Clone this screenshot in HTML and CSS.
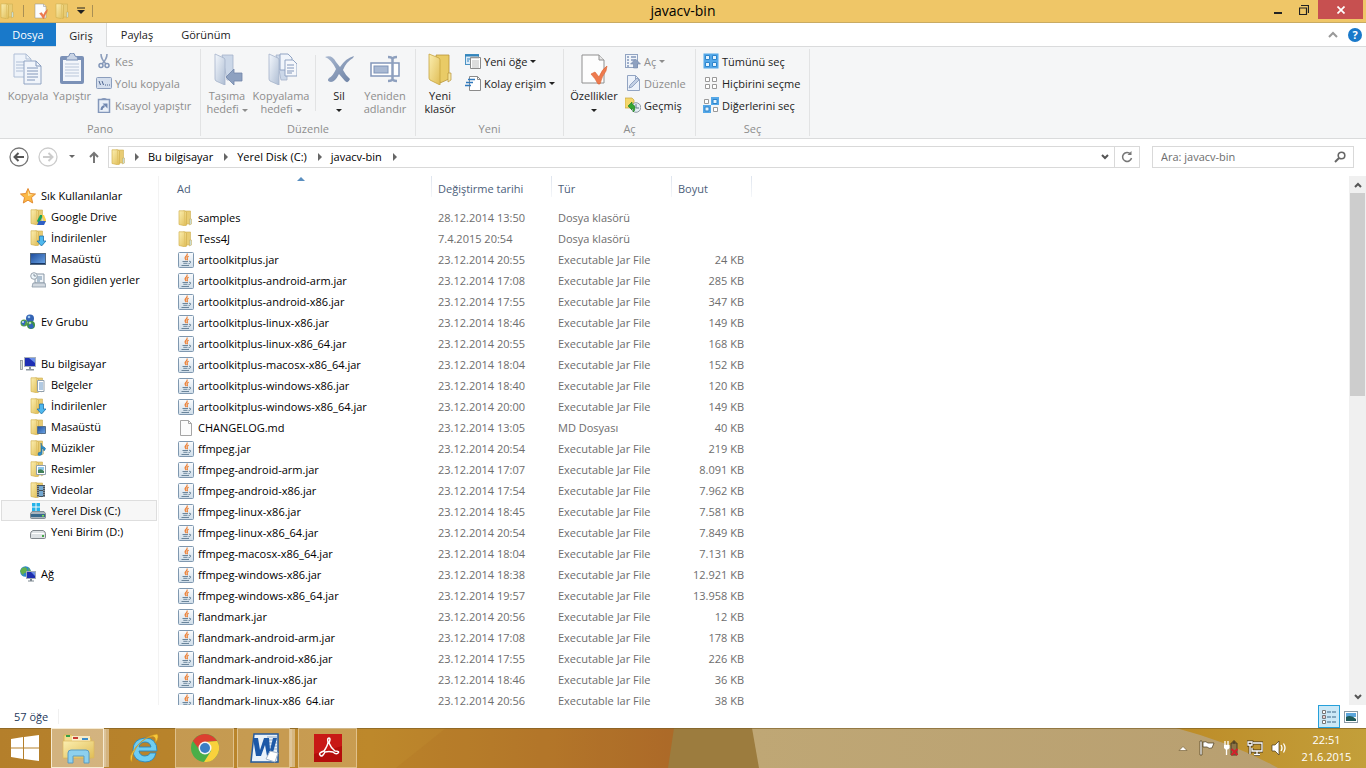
FILE: index.html
```html
<!DOCTYPE html>
<html lang="tr">
  <head>
    <meta charset="UTF-8" />
    <meta name="viewport" content="width=device-width, initial-scale=1.0" />
    <title>javacv-bin</title>
    <link rel="stylesheet" href="styles.css">
  </head>

  <body>
    <!-- Icon sprite -->
    <svg class="sprite" aria-hidden="true">
      <defs>
        <linearGradient id="gFolder" x1="0" y1="0" x2="1" y2="1">
          <stop offset="0" stop-color="#fbeeb0" /><stop offset="1" stop-color="#e0bd55" />
        </linearGradient>
        <linearGradient id="gPale" x1="0" y1="0" x2="1" y2="1">
          <stop offset="0" stop-color="#f4f8fd" /><stop offset="1" stop-color="#aebdd3" />
        </linearGradient>
        <linearGradient id="gBlue" x1="0" y1="0" x2="1" y2="1">
          <stop offset="0" stop-color="#1c4a9a" /><stop offset="1" stop-color="#6ea8e8" />
        </linearGradient>
        <linearGradient id="gJar" x1="0" y1="0" x2="0" y2="1">
          <stop offset="0" stop-color="#fafcfe" /><stop offset="1" stop-color="#cfdde9" />
        </linearGradient>
        <linearGradient id="gX" x1="0" y1="0" x2="1" y2="1">
          <stop offset="0" stop-color="#a9b8d0" /><stop offset="1" stop-color="#6b80a3" />
        </linearGradient>
      </defs>
      <symbol id="folder" viewBox="0 0 16 16">
        <path d="M5 1h7.500v13H6z" fill="#e8cc74" stroke="#cfae52" stroke-width=".6" />
        <path d="M11.500 9h2v5l-2 1z" fill="#c9dcd2" stroke="#c9aa55" stroke-width=".5" />
        <path d="M1 .8h5.500l2 1.200v13.200l-2 .5L1 14.500z" fill="url(#gFolder)" stroke="#d2b152" stroke-width=".7" />
        <path d="M6.500 1v14.500" stroke="#e0c268" stroke-width=".8" />
      </symbol>
      <symbol id="folder-big" viewBox="0 0 32 32">
        <path d="M12 2h13v24l-9 4z" fill="#e9cb66" stroke="#b8943a" stroke-width=".8" />
        <path d="M24 20h3v7l-3 2z" fill="#f6e6a0" stroke="#b8943a" stroke-width=".7" />
        <path d="M5 1l10 4q1 1 1 2v25L6 27q-1-1-1-2z" fill="url(#gFolder)" stroke="#c7a440" stroke-width=".8" />
      </symbol>
      <symbol id="pale-folder" viewBox="0 0 32 32">
        <path d="M11 2h11v25h-6z" fill="#cbd7e8" stroke="#a4b3ca" stroke-width=".8" />
        <path d="M4 1l9 4q1 1 1 2v25L5 28q-1-1-1-2z" fill="url(#gPale)" stroke="#a4b3ca" stroke-width=".8" />
      </symbol>
      <symbol id="copy" viewBox="0 0 32 32">
        <path d="M2 1h12l5 5v18H2z" fill="#eef3fa" stroke="#b0bfd6" />
        <path d="M14 1v5h5M4 9h9M4 12h8M4 15h8M4 18h7" fill="none" stroke="#b0bfd6" />
        <path d="M12 8h12l5 5v18H12z" fill="#f1f5fb" stroke="#91a4c3" />
        <path d="M24 8v5h5M15 15h11M15 18h11M15 21h11M15 24h11M15 27h8" fill="none" stroke="#8297ba" />
      </symbol>
      <symbol id="paste" viewBox="0 0 32 32">
        <rect x="4" y="3" width="24" height="28" rx="2" fill="#7b91b7" />
        <rect x="7" y="7" width="18" height="21" fill="#f3f6fb" />
        <path d="M9 11h14M9 14h14M9 17h14M9 20h14M9 23h14" stroke="#b9c6da" />
        <path d="M10 7q0-4 3-4 0-3 3-3t3 3q3 0 3 4z" fill="#c9d4e5" stroke="#7b91b7" />
      </symbol>
      <symbol id="cut" viewBox="0 0 16 16">
        <path d="M5 1q0 5 5 10M11 1q0 5-5 10" fill="none" stroke="#8c9dbb" stroke-width="1.600" />
        <circle cx="5" cy="12.500" r="2" fill="none" stroke="#8296b8" stroke-width="1.500" />
        <circle cx="11" cy="12.500" r="2" fill="none" stroke="#8296b8" stroke-width="1.500" />
      </symbol>
      <symbol id="path" viewBox="0 0 16 16">
        <rect x=".5" y="2.500" width="15" height="11" rx="1" fill="#d4deed" stroke="#8b9dbc" />
        <path d="M3 6l1.500 4M6 6l1.500 4" stroke="#4d648f" />
        <path d="M9 10h1M11 10h1M13 10h1" stroke="#4d648f" />
      </symbol>
      <symbol id="shortcut" viewBox="0 0 16 16">
        <rect x="2.500" y="2.500" width="11" height="13" fill="#eaf0f8" stroke="#8397ba" stroke-width="1.500" />
        <path d="M5 3q0-2 3-2t3 2z" fill="#8397ba" />
        <path d="M5.500 13q0-3 3-4" fill="none" stroke="#7087af" stroke-width="2" />
        <path d="M6.500 6.500h5v5z" fill="#7087af" />
      </symbol>
      <symbol id="move-to" viewBox="0 0 32 32">
        <use href="#pale-folder" />
        <path d="M15 24l8-8v4h8v8h-8v4z" fill="#8ea1c0" stroke="#7287aa" stroke-width=".8" />
      </symbol>
      <symbol id="copy-to" viewBox="0 0 32 32">
        <use href="#pale-folder" />
        <path d="M15 1h8l4 4v12H15z" fill="#f1f5fb" stroke="#91a4c3" />
        <path d="M20 7h8l4 4v12H20z" fill="#f6f8fc" stroke="#91a4c3" />
        <path d="M22 12h7M22 15h7M22 18h7M22 20h5" stroke="#8297ba" />
      </symbol>
      <symbol id="delete" viewBox="0 0 32 32">
        <path d="M2 4q7-3 11 5l4 5q6-9 14-11l-1 2q-7 4-10 12 3 6 7 9-2 5-5 2l-6-7q-4 8-8 8-5-1-2-4 4-2 7-9Q8 6 2 4z" fill="url(#gX)" />
      </symbol>
      <symbol id="rename" viewBox="0 0 32 32">
        <rect x="2" y="10" width="28" height="13" fill="#fff" stroke="#8397ba" stroke-width="1.500" />
        <rect x="5" y="13" width="14" height="7" fill="#a9b9d3" stroke="#7f94b8" />
        <path d="M19 4q4 0 4.500 2Q24 4 28 4M23.500 5v22M19 28q4 0 4.500-2 .5 2 4.500 2" fill="none" stroke="#8ea0be" stroke-width="2.500" />
      </symbol>
      <symbol id="new-item" viewBox="0 0 16 16">
        <rect x=".5" y="1.500" width="13" height="10" fill="#dcebf8" stroke="#4b93c4" />
        <path d="M0 2.500h14" stroke="#3285bd" stroke-width="2" />
        <path d="M2 6h3M2 8h2" stroke="#3285bd" />
        <path d="M5.500 4.500h10v11h-10z" fill="#fff" stroke="#8b8b8b" />
        <path d="M7 8h7M7 10h7M7 12h7M7 14h7M7 3v3M9 3v3M11 3v3M13 3v3" stroke="#aaa" stroke-width=".8" />
      </symbol>
      <symbol id="easy" viewBox="0 0 16 16">
        <path d="M4.500 1.500h8l3 3v11h-11z" fill="#fff" stroke="#8b8b8b" />
        <path d="M12.500 1.500v3h3" fill="none" stroke="#8b8b8b" />
        <path d="M3 4.500h7M1 7.500h7M0 10.500h6" stroke="#2f78bd" stroke-width="1.300" />
      </symbol>
      <symbol id="props" viewBox="0 0 32 32">
        <path d="M4 2h17l5 5v23H4z" fill="#fdfdfd" stroke="#8f8f8f" />
        <path d="M21 2v5h5" fill="#e6e6e6" stroke="#8f8f8f" />
        <path d="M13 21l4-2 4 5q3-8 8-11l-1 5q-4 5-6 13h-2q-3-6-7-10z" fill="#ee7a4e" stroke="#d9612f" stroke-width=".6" />
      </symbol>
      <symbol id="open" viewBox="0 0 16 16">
        <rect x=".5" y="1.500" width="12" height="13" fill="#f1f5fa" stroke="#92a4c2" />
        <path d="M2 4h2M6 4h5M2 7h2M6 7h4M2 10h2M2 13h2" stroke="#8297ba" stroke-width="1.500" />
        <path d="M10.500 6l5 5h-3v4h-4v-4h-3z" fill="#8ea1c0" stroke="#7287aa" stroke-width=".6" />
      </symbol>
      <symbol id="edit" viewBox="0 0 16 16">
        <path d="M2.500.5h8l4 4v11h-12z" fill="#edf2fa" stroke="#92a4c2" />
        <path d="M10.500.5v4h4" fill="none" stroke="#92a4c2" />
        <path d="M4 13l1-3 7-7 2 2-7 7z" fill="#c3d0e4" stroke="#8397ba" stroke-width=".8" />
      </symbol>
      <symbol id="history" viewBox="0 0 16 16">
        <path d="M0 1h7l2 2v8H0z" fill="#f5d76b" stroke="#c7a33e" stroke-width=".7" />
        <circle cx="11" cy="10.500" r="4.800" fill="#e4eef5" stroke="#8f9aa3" />
        <path d="M11 7v4h3" fill="none" stroke="#5f7789" />
        <path d="M3 9l4-4v2q3 1 3 4t-2 4q1-3-1-4v2z" fill="#33a532" stroke="#1b7a20" stroke-width=".6" />
      </symbol>
      <symbol id="sel-all" viewBox="0 0 16 16">
        <rect x=".5" y=".5" width="15" height="15" fill="#55a8e8" />
        <path d="M2.500 2.500h4v4h-4zM9.500 2.500h4v4h-4zM2.500 9.500h4v4h-4zM9.500 9.500h4v4h-4z" fill="#e6f4fd" stroke="#2c84cc" />
      </symbol>
      <symbol id="sel-none" viewBox="0 0 16 16">
        <path d="M2.500 2.500h4v4h-4zM9.500 2.500h4v4h-4zM2.500 9.500h4v4h-4zM9.500 9.500h4v4h-4z" fill="#fff" stroke="#999" />
      </symbol>
      <symbol id="sel-inv" viewBox="0 0 16 16">
        <path d="M8 0h8v8H8zM0 8h8v8H0z" fill="#55a8e8" />
        <path d="M10 2.500h4v4h-4zM2 10h4v4H2z" fill="#e6f4fd" stroke="#2c84cc" />
        <path d="M1.500 2.500h4v4h-4zM10.500 10.500h4v4h-4z" fill="#fff" stroke="#999" />
      </symbol>
      <symbol id="jar" viewBox="0 0 16 16">
        <rect x=".5" y=".5" width="15" height="15" rx="1" fill="url(#gJar)" stroke="#7f98b0" />
        <path d="M9 1.500q.8 1.500-1.200 3-1.500 1.500.4 3.500M10.700 4.300q-2.400 1-1.400 2.300.5.900-.5 1.600" fill="none" stroke="#ec8137" stroke-width="1.200" />
        <path d="M4.500 9.500h5.500M5.300 11.300H9.500M3.500 13.500h7.500M11 9.200q2.400 0 1.500 1.500-.5.700-2 1" fill="none" stroke="#5d7a92" stroke-width=".9" />
      </symbol>
      <symbol id="file" viewBox="0 0 16 16">
        <path d="M2.500.5h8l3 3v12h-11z" fill="#fcfcfc" stroke="#a5a5a5" />
        <path d="M10.500.5v3h3" fill="none" stroke="#a5a5a5" />
      </symbol>
      <symbol id="star" viewBox="0 0 16 16">
        <path d="M8 .5l2.200 5 5.300.5-4 3.600L12.700 15 8 12.200 3.300 15l1.200-5.400-4-3.600 5.300-.5z" fill="#fbb945" stroke="#e08429" stroke-width=".9" />
        <path d="M8 2.500L9.300 6 13 6.700 8 8z" fill="#fde4a0" />
      </symbol>
      <symbol id="gdrive" viewBox="0 0 16 16">
        <use href="#folder" />
        <path d="M10 6h3l-4 9-2-3z" fill="#1ba05c" /><path d="M12 6h2l3 7h-3z" fill="#fdd045" /><path d="M9 12h7l-2 4H7z" fill="#2f5fc4" />
      </symbol>
      <symbol id="download" viewBox="0 0 16 16">
        <use href="#folder" />
        <path d="M9.500 6h4v5H16l-4.500 5L7 11h2.500z" fill="#4fb8ee" stroke="#1f73ae" stroke-width=".8" />
      </symbol>
      <symbol id="desktop" viewBox="0 0 16 16">
        <rect x=".5" y="2.500" width="15" height="11" fill="url(#gBlue)" stroke="#52677e" />
        <path d="M1 12.500h14" stroke="#173767" />
      </symbol>
      <symbol id="recent" viewBox="0 0 16 16">
        <path d="M5 2h9v9H5z" fill="#f0f4f8" stroke="#8997a5" />
        <path d="M7 5h5M7 7h5M7 9h3" stroke="#6b8ba8" />
        <path d="M3 11h12l1 4H2z" fill="#d1d8df" stroke="#8997a5" stroke-width=".8" />
        <circle cx="4" cy="4" r="3.300" fill="#eef6fb" stroke="#98a3ad" />
        <path d="M4 2v2h2" fill="none" stroke="#6b7c8b" stroke-width=".8" />
      </symbol>
      <symbol id="homegroup" viewBox="0 0 16 16">
        <circle cx="10" cy="4.500" r="4" fill="#3464b5" /><circle cx="4" cy="9" r="3.500" fill="#55a049" /><circle cx="11" cy="11" r="4" fill="#3c8f48" />
        <path d="M1 9q1-3 5-2l-2 5zM8 12l4-3 2 4-3 2z" fill="#3266c1" />
        <circle cx="9" cy="3" r="1.300" fill="#9ec8ee" /><circle cx="10" cy="9" r="1.300" fill="#b5e0b0" /><circle cx="3" cy="8" r="1" fill="#d0e8f7" />
      </symbol>
      <symbol id="computer" viewBox="0 0 16 16">
        <rect x=".5" y="4.500" width="2" height="9" fill="#d9e1d6" stroke="#8a9399" stroke-width=".8" />
        <rect x="4.500" y="1.500" width="11" height="9" fill="#1e2fb4" stroke="#a9b2bb" />
        <path d="M9 2h6v5z" fill="#6c91e8" /><path d="M9 11h2v2h3v1.500H6V13h3z" fill="#8d979f" />
      </symbol>
      <symbol id="docs" viewBox="0 0 16 16">
        <use href="#folder" />
        <path d="M7.500 3.500h6.500v11H7.500z" fill="#fff" stroke="#92a0ad" /><path d="M9 6h4M9 8h4M9 10h4M9 12h4" stroke="#6595c6" />
      </symbol>
      <symbol id="fdesk" viewBox="0 0 16 16">
        <use href="#folder" />
        <path d="M7.500 7.500h8v7h-8z" fill="url(#gBlue)" stroke="#54708c" />
      </symbol>
      <symbol id="music" viewBox="0 0 16 16">
        <use href="#folder" />
        <path d="M11 3q0 3 3 4t0 4q0-2-2-3v5q0 2-2 2.500T8 14q0-2 3-2z" fill="#2d8fcd" stroke="#1a628f" stroke-width=".5" />
      </symbol>
      <symbol id="pics" viewBox="0 0 16 16">
        <use href="#folder" />
        <path d="M6.500 4.500h9v9h-9z" fill="#fff" stroke="#91a1ad" /><path d="M8 6h6v3H8z" fill="#8cc6ea" /><path d="M8 9q3-2 6 1v2H8z" fill="#41805a" />
      </symbol>
      <symbol id="video" viewBox="0 0 16 16">
        <use href="#folder" />
        <path d="M7 3h8v12H7z" fill="#46525c" /><path d="M9 4h4v4H9zM9 9h4v5H9z" fill="#74a9d2" />
        <path d="M8 4v11M14 4v11" stroke="#dfe6ea" stroke-dasharray="1 1" stroke-width=".8" />
      </symbol>
      <symbol id="disk-c" viewBox="0 0 16 16">
        <path d="M2 0h3.500v3.500H2zM6.500 0H10v3.500H6.500zM2 4.500h3.500V8H2zM6.500 4.500H10V8H6.500z" fill="#23b3ea" />
        <path d="M2 8.500h12l1.500 2v4q0 1-1 1h-13q-1 0-1-1v-4z" fill="#a9b4bd" stroke="#6d7881" stroke-width=".8" />
        <path d="M1 11h14v3H1z" fill="#38698b" /><path d="M12 12h2v1.500h-2z" fill="#79e34b" />
      </symbol>
      <symbol id="disk-d" viewBox="0 0 16 16">
        <path d="M3 6.500h10q2.500 1 2.500 3v4q0 1-1 1h-13q-1 0-1-1v-4q0-2 2.500-3z" fill="#dde1e4" stroke="#747b80" stroke-width=".9" />
        <path d="M2 9.500h12" stroke="#fff" /><path d="M12 11h2v2h-2z" fill="#46a845" />
      </symbol>
      <symbol id="network" viewBox="0 0 16 16">
        <circle cx="5.500" cy="5.500" r="5.300" fill="#2c86cb" /><path d="M2 2q4-2 5 1T5 7t-1 3Q1 8 0 5zM8 1l3 4-2 2z" fill="#62b04d" />
        <rect x="6.500" y="5.500" width="9" height="7" fill="#1d2fae" stroke="#a3acb8" /><path d="M11 6h4v4z" fill="#6d90e6" /><path d="M10 13h2v1.500h2v1H8v-1h2z" fill="#7d8790" />
      </symbol>
    </svg>

    <header class="titlebar">
      <div class="quick">
        <svg class="ic"><use href="#folder" /></svg>
        <span class="bar"></span>
        <button aria-label="Özellikler"><svg class="ic"><use href="#props" /></svg></button>
        <button aria-label="Yeni klasör"><svg class="ic"><use href="#folder" /></svg></button>
        <button aria-label="Özelleştir"><svg width="8" height="8" viewBox="0 0 8 8"><path d="M0 1h8" stroke="#222" /><path d="M0 3h8L4 7z" fill="#222" /></svg></button>
        <span class="bar"></span>
      </div>
      <h1 class="title">javacv-bin</h1>
      <div class="window-buttons">
        <button aria-label="Simge durumuna küçült"><svg width="10" height="10" viewBox="0 0 10 10"><path d="M1 8h8" stroke="#222" stroke-width="2" /></svg></button>
        <button aria-label="Önceki boyut"><svg width="10" height="10" viewBox="0 0 10 10"><path d="M.5 3h7v6.500h-7zM0 3h8M2 .5h7.500V8" fill="none" stroke="#222" stroke-width="1.200" /></svg></button>
        <button class="close" aria-label="Kapat"><svg width="8" height="8" viewBox="0 0 8 8"><path d="M.5.5l7 7M7.500.5l-7 7" stroke="#fff" stroke-width="1.700" /></svg></button>
      </div>
    </header>

    <nav class="tabs">
      <button class="tab file">Dosya</button>
      <button class="tab active">Giriş</button>
      <button class="tab">Paylaş</button>
      <button class="tab wide">Görünüm</button>
      <div class="tab-tools">
        <button aria-label="Şeridi küçült"><svg width="10" height="8" viewBox="0 0 10 8"><path d="M1 6l4-4 4 4" fill="none" stroke="#999" stroke-width="2" /></svg></button>
        <button class="help" aria-label="Yardım">?</button>
      </div>
    </nav>

    <section class="ribbon">
      <div class="group pano">
        <div class="tools">
          <button class="big off w44"><svg class="ic32"><use href="#copy" /></svg><span>Kopyala</span></button>
          <button class="big off w44"><svg class="ic32"><use href="#paste" /></svg><span>Yapıştır</span></button>
          <div class="stack">
            <button class="small off"><svg class="ic"><use href="#cut" /></svg>Kes</button>
            <button class="small off"><svg class="ic"><use href="#path" /></svg>Yolu kopyala</button>
            <button class="small off"><svg class="ic"><use href="#shortcut" /></svg>Kısayol yapıştır</button>
          </div>
        </div>
        <div class="caption">Pano</div>
      </div>
      <div class="group duzenle">
        <div class="tools">
          <button class="big off w52"><svg class="ic32"><use href="#move-to" /></svg><span>Taşıma<br>hedefi <i class="caret"></i></span></button>
          <button class="big off w56"><svg class="ic32"><use href="#copy-to" /></svg><span>Kopyalama<br>hedefi <i class="caret"></i></span></button>
          <span class="divider"></span>
          <button class="big w44"><svg class="ic32"><use href="#delete" /></svg><span>Sil<br><i class="caret"></i></span></button>
          <button class="big off w48"><svg class="ic32"><use href="#rename" /></svg><span>Yeniden<br>adlandır</span></button>
        </div>
        <div class="caption">Düzenle</div>
      </div>
      <div class="group yeni">
        <div class="tools">
          <button class="big w48"><svg class="ic32"><use href="#folder-big" /></svg><span>Yeni<br>klasör</span></button>
          <div class="stack tight">
            <button class="small"><svg class="ic"><use href="#new-item" /></svg>Yeni öğe <i class="caret"></i></button>
            <button class="small"><svg class="ic"><use href="#easy" /></svg>Kolay erişim <i class="caret"></i></button>
          </div>
        </div>
        <div class="caption">Yeni</div>
      </div>
      <div class="group ac">
        <div class="tools">
          <button class="big w60"><svg class="ic32"><use href="#props" /></svg><span>Özellikler<br><i class="caret"></i></span></button>
          <div class="stack tight">
            <button class="small off"><svg class="ic"><use href="#open" /></svg>Aç <i class="caret"></i></button>
            <button class="small off"><svg class="ic"><use href="#edit" /></svg>Düzenle</button>
            <button class="small"><svg class="ic"><use href="#history" /></svg>Geçmiş</button>
          </div>
        </div>
        <div class="caption">Aç</div>
      </div>
      <div class="group sec">
        <div class="tools">
          <div class="stack">
            <button class="small"><svg class="ic"><use href="#sel-all" /></svg>Tümünü seç</button>
            <button class="small"><svg class="ic"><use href="#sel-none" /></svg>Hiçbirini seçme</button>
            <button class="small"><svg class="ic"><use href="#sel-inv" /></svg>Diğerlerini seç</button>
          </div>
        </div>
        <div class="caption">Seç</div>
      </div>
    </section>

    <div class="navbar">
      <button class="nav-btn" aria-label="Geri"><svg width="20" height="20" viewBox="0 0 20 20"><circle cx="10" cy="10" r="9" fill="none" stroke="#777" stroke-width="1.300" /><path d="M15 10H6M9.500 6L5.500 10l4 4" fill="none" stroke="#555" stroke-width="2" /></svg></button>
      <button class="nav-btn" aria-label="İleri"><svg width="20" height="20" viewBox="0 0 20 20"><circle cx="10" cy="10" r="9" fill="none" stroke="#ccc" stroke-width="1.300" /><path d="M5 10h9M10.500 6l4 4-4 4" fill="none" stroke="#ccc" stroke-width="2" /></svg></button>
      <button class="nav-drop" aria-label="Son konumlar"><i class="caret"></i></button>
      <button class="nav-up" aria-label="Yukarı"><svg width="10" height="12" viewBox="0 0 10 12"><path d="M5 12V2M1 6l4-4 4 4" fill="none" stroke="#777" stroke-width="2" /></svg></button>
      <div class="address">
        <svg class="ic"><use href="#folder" /></svg>
        <i class="arrow first"></i><a href="#">Bu bilgisayar</a>
        <i class="arrow"></i><a href="#">Yerel Disk (C:)</a>
        <i class="arrow"></i><a href="#">javacv-bin</a>
        <i class="arrow"></i>
        <button class="addr-drop" aria-label="Önceki konumlar"><svg width="8" height="6" viewBox="0 0 8 6"><path d="M1 1l3 3 3-3" fill="none" stroke="#555" stroke-width="2" /></svg></button>
        <button class="refresh" aria-label="Yenile"><svg width="12" height="12" viewBox="0 0 12 12"><path d="M9.500 3A4.500 4.500 0 1 0 10.500 7" fill="none" stroke="#777" stroke-width="1.500" /><path d="M6.500 4h4V0z" fill="#777" /></svg></button>
      </div>
      <label class="search">
        <input type="text" placeholder="Ara: javacv-bin" aria-label="Ara: javacv-bin" />
        <svg width="12" height="12" viewBox="0 0 12 12"><circle cx="7.500" cy="4.500" r="3.300" fill="none" stroke="#666" stroke-width="1.600" /><path d="M5 7l-4 4" stroke="#666" stroke-width="2" /></svg>
      </label>
    </div>

    <main class="content">
      <aside class="sidebar">
        <ul>
          <li><a href="#"><svg class="ic"><use href="#star" /></svg>Sık Kullanılanlar</a></li>
          <li class="sub"><a href="#"><svg class="ic"><use href="#gdrive" /></svg>Google Drive</a></li>
          <li class="sub"><a href="#"><svg class="ic"><use href="#download" /></svg>İndirilenler</a></li>
          <li class="sub"><a href="#"><svg class="ic"><use href="#desktop" /></svg>Masaüstü</a></li>
          <li class="sub"><a href="#"><svg class="ic"><use href="#recent" /></svg>Son gidilen yerler</a></li>
        </ul>
        <ul>
          <li><a href="#"><svg class="ic"><use href="#homegroup" /></svg>Ev Grubu</a></li>
        </ul>
        <ul>
          <li><a href="#"><svg class="ic"><use href="#computer" /></svg>Bu bilgisayar</a></li>
          <li class="sub"><a href="#"><svg class="ic"><use href="#docs" /></svg>Belgeler</a></li>
          <li class="sub"><a href="#"><svg class="ic"><use href="#download" /></svg>İndirilenler</a></li>
          <li class="sub"><a href="#"><svg class="ic"><use href="#fdesk" /></svg>Masaüstü</a></li>
          <li class="sub"><a href="#"><svg class="ic"><use href="#music" /></svg>Müzikler</a></li>
          <li class="sub"><a href="#"><svg class="ic"><use href="#pics" /></svg>Resimler</a></li>
          <li class="sub"><a href="#"><svg class="ic"><use href="#video" /></svg>Videolar</a></li>
          <li class="sub selected"><a href="#"><svg class="ic"><use href="#disk-c" /></svg>Yerel Disk (C:)</a></li>
          <li class="sub"><a href="#"><svg class="ic"><use href="#disk-d" /></svg>Yeni Birim (D:)</a></li>
        </ul>
        <ul>
          <li><a href="#"><svg class="ic"><use href="#network" /></svg>Ağ</a></li>
        </ul>
      </aside>

      <div class="files">
        <table>
          <thead>
            <tr>
              <th class="col-name">Ad<svg class="sort" width="8" height="4" viewBox="0 0 8 4"><path d="M0 4l4-4 4 4z" fill="#5b8fc0" /></svg></th>
              <th class="col-date">Değiştirme tarihi</th>
              <th class="col-type">Tür</th>
              <th class="col-size">Boyut</th>
            </tr>
          </thead>
          <tbody id="fileRows"></tbody>
        </table>
      </div>

      <div class="scrollbar">
        <button aria-label="Yukarı kaydır"><svg width="8" height="6" viewBox="0 0 8 6"><path d="M1 5l3-3 3 3" fill="none" stroke="#555" stroke-width="2" /></svg></button>
        <div class="track"><div class="thumb"></div></div>
        <button aria-label="Aşağı kaydır"><svg width="8" height="6" viewBox="0 0 8 6"><path d="M1 1l3 3 3-3" fill="none" stroke="#555" stroke-width="2" /></svg></button>
      </div>
    </main>

    <div class="statusbar">
      <span class="count">57 öğe</span>
      <div class="views">
        <button class="on" aria-label="Ayrıntılar"><svg width="16" height="14" viewBox="0 0 16 14"><path d="M1.500.5h3v3h-3zM1.500 5.500h3v3h-3zM1.500 10.500h3v3h-3z" fill="#fff" stroke="#777" /><path d="M6 2h4M11 2h4M6 7h4M11 7h4M6 12h4M11 12h4" stroke="#3d6687" /><path d="M2.500 6.500h1v1h-1z" fill="#b03030" /></svg></button>
        <button aria-label="Büyük simgeler"><svg width="14" height="12" viewBox="0 0 14 12"><rect x=".5" y=".5" width="13" height="11" fill="#fff" stroke="#8b9aa5" /><path d="M2 2h10v4H2z" fill="#5ba6dc" /><path d="M2 6q5-3 10 2v2H2z" fill="#1f5a58" /></svg></button>
      </div>
    </div>

    <footer class="taskbar">
      <svg class="wallpaper" viewBox="0 0 1366 40" preserveAspectRatio="none" aria-hidden="true">
        <defs>
          <linearGradient id="gWood" x1="0" x2="1"><stop offset="0" stop-color="#b47f2b" /><stop offset=".55" stop-color="#bd882b" /><stop offset=".8" stop-color="#b67a2b" /><stop offset="1" stop-color="#ad6b2a" /></linearGradient>
          <linearGradient id="gSand" x1="0" x2="1"><stop offset="0" stop-color="#bfa775" /><stop offset="1" stop-color="#b79e70" /></linearGradient>
          <linearGradient id="gGold" x1="0" x2="1"><stop offset="0" stop-color="#bd8c28" /><stop offset="1" stop-color="#c39f3a" /></linearGradient>
        </defs>
        <path d="M0 0h674v40H0z" fill="url(#gWood)" />
        <path d="M446 0h228v40H396z" fill="#a86424" opacity=".15" />
        <path d="M674 0h90v40h-96z" fill="#9c7c3e" />
        <path d="M752 0h614v40H759z" fill="url(#gSand)" />
        <path d="M1176 0h190v40h-88q-45-25-102-40z" fill="url(#gGold)" />
        <path d="M0 .5h1366" stroke="#7a5d25" opacity=".6" />
      </svg>
      <button class="start" aria-label="Başlat"><svg width="28" height="26" viewBox="0 0 28 26"><path d="M0 4l12-2v10.500H0zM13 2l15-2v12.500H13zM0 13.500h12V24L0 22zM13 13.500h15V26l-15-2z" fill="#fff" /></svg></button>
      <button class="task current stacked" aria-label="Dosya Gezgini">
        <svg width="34" height="32" viewBox="0 0 34 32">
          <path d="M3 3h8l2 3h17v20H3z" fill="#f3dc8f" stroke="#d9b558" /><path d="M11 4h18v6H11z" fill="#fff8dc" opacity=".8" />
          <path d="M5 3h4v2H5z" fill="#37a046" /><path d="M12 5h5v2h-5z" fill="#c83e34" /><path d="M21 6h6v2h-6z" fill="#3d8cc9" />
          <path d="M2 9h31v17H2z" fill="url(#gFolder)" stroke="#dcb860" stroke-width=".7" />
          <path d="M7 31V21q0-3 3-3h15q3 0 3 3v10h-5v-7H12v7z" fill="#8dd0ee" stroke="#5c9cc1" />
        </svg>
      </button>
      <button class="task plain" aria-label="Internet Explorer">
        <svg width="30" height="32" viewBox="0 0 30 32">
          <path d="M28 19H10q1 5 6 5 4 0 5-3h6q-2 9-11 9Q4 29 4 18T16 6q12 0 12 13zM10 15h12q-1-5-6-5t-6 5z" fill="#6fcdf2" stroke="#2a87bd" stroke-width=".9" />
          <path d="M3 30q-5-4 4-15T28 2q3 3-2 9 2-8-5-6-9 3-14 11T3 30z" fill="#f7c93a" stroke="#c98e1d" stroke-width=".6" />
        </svg>
      </button>
      <button class="task" aria-label="Google Chrome">
        <svg width="28" height="28" viewBox="0 0 28 28">
          <circle cx="14" cy="14" r="14" fill="#4aae48" />
          <path d="M1.900 7A14 14 0 0 1 26.100 7L14 8l-6 7z" fill="#dd3f30" />
          <path d="M26.100 7A14 14 0 0 1 13 28l7-11q1-5-6-9z" fill="#f9d13c" />
          <circle cx="14" cy="14" r="6.500" fill="#f5f5f5" /><circle cx="14" cy="14" r="5" fill="#3b7ec4" />
        </svg>
      </button>
      <button class="task stacked" aria-label="Microsoft Word">
        <svg width="30" height="30" viewBox="0 0 30 30">
          <path d="M5 1h24v28H2z" fill="#eaf2fa" stroke="#255a9c" stroke-width="1.500" />
          <path d="M18 4h10M18 7h10M18 10h10M18 13h10M18 16h10" stroke="#8fa9c9" />
          <path d="M4 5h5l2 12 4-12h5l1 12 3-12h4l-5 18h-5l-2-11-4 11H7z" fill="#1c58a7" />
          <path d="M21 18l8 2-3 9-9-3z" fill="#fff" stroke="#a5b5c9" />
        </svg>
      </button>
      <button class="task" aria-label="Adobe Reader">
        <svg width="28" height="28" viewBox="0 0 28 28">
          <path d="M0 0h28v28H0z" fill="#b50d0b" /><path d="M0 0h28v12L0 20z" fill="#d0201b" opacity=".7" />
          <path d="M6 21q-2-2 4-4 4-6 4-9-1-4 1-4t0 5q2 5 6 8 5 0 3 2t-5-1q-4-1-8 0-3 6-5 3z" fill="none" stroke="#fff" stroke-width="1.500" />
        </svg>
      </button>
      <div class="tray">
        <button aria-label="Gizli simgeler"><svg width="10" height="6" viewBox="0 0 10 6"><path d="M1 5.500l4-4 4 4z" fill="#fff" stroke="#6a5326" stroke-width=".6" /></svg></button>
        <button aria-label="İşlem Merkezi"><svg width="16" height="16" viewBox="0 0 16 16"><path d="M1 1h2v14H1zM4 2q3-1 5 1h6l-2 5q-3 1-5-1H4z" fill="#fff" stroke="#45361a" stroke-width=".7" /></svg></button>
        <button aria-label="Pil"><svg width="16" height="16" viewBox="0 0 16 16"><path d="M8 3h6v12H8zM10 1h2v2h-2z" fill="#8c7446" stroke="#4a3d22" /><path d="M2 1v4M5 1v4M3.500 9v6" stroke="#fff" stroke-width="1.300" /><path d="M1 5h5.500v3L5 9.500H2.500L1 8z" fill="#fff" /><path d="M8.500 9l6 6M14.500 9l-6 6" stroke="#d3202b" stroke-width="2" /></svg></button>
        <button aria-label="Ağ"><svg width="16" height="16" viewBox="0 0 16 16"><path d="M6 3h9v8H5V8M10 11v3M7 14.500h6M1 2h4v3H1zM3 5v9" fill="none" stroke="#45361a" stroke-width="2.800" /><path d="M6 3h9v8H5V8M10 11v3M7 14.500h6M1 2h4v3H1zM3 5v9" fill="none" stroke="#fff" stroke-width="1.300" /></svg></button>
        <button aria-label="Ses"><svg width="16" height="16" viewBox="0 0 16 16"><path d="M1 5h3l4-4v14l-4-4H1z" fill="#fff" stroke="#45361a" stroke-width=".7" /><path d="M10 5q2 3 0 6M12.500 3.500q3 4.500 0 9" fill="none" stroke="#fff" stroke-width="1.300" /></svg></button>
      </div>
      <div class="clock"><time>22:51</time><time>21.6.2015</time></div>
    </footer>

    <script src="script.js"></script>
  </body>
</html>
```

FILE: styles.css
```css
* {
  box-sizing: border-box;
}

body {
  margin: 0;
  height: 100vh;
  display: flex;
  flex-direction: column;
  overflow: hidden;
  background: #fff;
  color: #000;
  font-family: "Open Sans", "Noto Sans", sans-serif;
  font-size: 11px;
}

button {
  padding: 0;
  border: 0;
  background: none;
  color: inherit;
  font: inherit;
  display: flex;
  align-items: center;
  justify-content: center;
}

a {
  color: inherit;
  text-decoration: none;
}

.sprite {
  position: absolute;
  width: 0;
  height: 0;
}

.ic {
  width: 16px;
  height: 16px;
  flex: none;
}

.ic32 {
  width: 32px;
  height: 32px;
  flex: none;
}

.caret {
  display: inline-block;
  border: 3px solid transparent;
  border-top: 3px solid currentColor;
  border-bottom: 0;
  vertical-align: middle;
}

/* Title bar */
.titlebar {
  display: grid;
  grid-template-columns: 1fr auto 1fr;
  height: 23px;
  flex: none;
  background: #efc667;
  border-bottom: 1px solid #c9ab63;
}

.quick {
  display: flex;
  align-items: center;
  gap: 6px;
}

.bar {
  width: 1px;
  height: 12px;
  margin: 0 3px 0 1px;
  background: #a98f54;
}

.title {
  margin: 0;
  font-size: 14px;
  line-height: 22px;
  font-weight: normal;
}

.window-buttons {
  display: flex;
  align-items: flex-start;
  justify-content: flex-end;
  padding-right: 3px;
}

.window-buttons button {
  width: 26px;
  height: 19px;
}

.window-buttons .close {
  width: 45px;
  margin-left: 1px;
  background: #c75050;
}

/* Ribbon tabs */
.tabs {
  display: flex;
  height: 24px;
  flex: none;
  border-bottom: 1px solid #dadbdc;
}

.tab {
  width: 60px;
  height: 23px;
  color: #222;
}

.tab.file {
  width: 56px;
  background: #1979ca;
  color: #fff;
}

.tab.active {
  width: 51px;
  height: 24px;
  background: #f5f6f7;
  border-right: 1px solid #dadbdc;
}

.tab.wide {
  width: 78px;
}

.tab-tools {
  display: flex;
  align-items: center;
  gap: 10px;
  margin-left: auto;
  padding-right: 4px;
}

.help {
  width: 14px;
  height: 14px;
  border-radius: 50%;
  background: #1979ca;
  color: #fff;
  font-weight: bold;
}

/* Ribbon */
.ribbon {
  display: flex;
  height: 92px;
  flex: none;
  padding: 2px 0;
  background: #f5f6f7;
  border-bottom: 1px solid #dadbdc;
  color: #222;
}

.group {
  display: flex;
  flex-direction: column;
  flex: none;
  border-right: 1px solid #e2e3e4;
}

.pano {
  width: 201px;
  padding-left: 6px;
}

.duzenle {
  width: 215px;
}

.yeni {
  width: 148px;
}

.ac {
  width: 132px;
}

.sec {
  width: 114px;
}

.tools {
  display: flex;
  flex: 1;
  align-items: flex-start;
}

.caption {
  height: 15px;
  line-height: 15px;
  text-align: center;
  color: #8d8d8d;
}

.pano .caption {
  padding-right: 6px;
}

.big {
  flex-direction: column;
  gap: 4px;
  padding-top: 4px;
  line-height: 13px;
  white-space: nowrap;
}

.w44 {
  width: 44px;
}

.w48 {
  width: 48px;
}

.w52 {
  width: 52px;
}

.w56 {
  width: 56px;
}

.w60 {
  width: 60px;
}

.off {
  color: #8d8d8d;
}

.divider {
  width: 1px;
  height: 56px;
  margin: 6px 1px 0 6px;
  background: #e2e3e4;
}

.stack {
  padding: 1px 0 0 2px;
}

.stack.tight {
  padding-left: 1px;
}

.sec .stack {
  padding-left: 7px;
}

.small {
  height: 22px;
  gap: 3px;
  white-space: nowrap;
}

/* Address row */
.navbar {
  display: flex;
  align-items: center;
  height: 37px;
  flex: none;
  padding: 0 12px 2px 9px;
}

.nav-btn {
  width: 20px;
  margin-right: 9px;
}

.nav-drop {
  width: 10px;
  color: #666;
}

.nav-up {
  width: 34px;
}

.address,
.search {
  display: flex;
  align-items: center;
  height: 22px;
  border: 1px solid #d9d9d9;
}

.address {
  flex: 1;
  margin-right: 12px;
  margin-left: -3px;
  padding-left: 2px;
}

.arrow {
  border: 4px solid transparent;
  border-left: 4px solid #666;
  border-right: 0;
  margin: 0 9px 0 11px;
}

.arrow.first {
  margin-left: 8px;
}

.addr-drop {
  width: 18px;
  height: 20px;
  margin-left: auto;
}

.refresh {
  width: 25px;
  height: 20px;
  border-left: 1px solid #d9d9d9;
}

.search {
  width: 202px;
  padding: 0 7px 0 8px;
}

.search input {
  flex: 1;
  min-width: 0;
  padding: 0;
  border: 0;
  outline: none;
  background: none;
  font: inherit;
}

.search input::placeholder {
  color: #6d6d6d;
}

/* Folder tree and file list */
.content {
  display: flex;
  flex: 1;
  min-height: 0;
}

.sidebar {
  width: 159px;
  flex: none;
  padding: 9px 1px 0 1px;
  border-right: 1px solid #f3f3f3;
  white-space: nowrap;
}

.sidebar ul {
  margin: 0 0 21px;
  padding: 0;
  list-style: none;
}

.sidebar a {
  display: flex;
  align-items: center;
  gap: 5px;
  height: 21px;
  padding-left: 18px;
  border: 1px solid transparent;
}

.sidebar .sub a {
  padding-left: 28px;
}

.sidebar .selected a {
  background: #f7f7f7;
  border-color: #dedede;
}

.files {
  flex: 1;
  min-width: 0;
  overflow: hidden;
  padding-left: 18px;
}

table {
  width: 575px;
  table-layout: fixed;
  border-collapse: collapse;
}

th,
td {
  padding: 0 0 0 6px;
  text-align: left;
  font-weight: normal;
  white-space: nowrap;
}

th {
  position: relative;
  height: 31px;
  padding-bottom: 6px;
  color: #4c607a;
  background: linear-gradient(#dfe5ee, #f4f6f9) right top / 1px 21px no-repeat;
}

td {
  height: 21px;
  color: #6d6d6d;
}

.col-name {
  width: 255px;
  padding-left: 0;
}

.col-date,
.col-type {
  width: 120px;
}

.col-size {
  width: 80px;
}

.sort {
  position: absolute;
  left: 120px;
  top: 1px;
}

.name {
  padding-left: 1px;
  color: #000;
}

.name span {
  display: flex;
  align-items: center;
  gap: 4px;
}

.size {
  padding-right: 8px;
  text-align: right;
}

.scrollbar {
  display: flex;
  flex-direction: column;
  width: 17px;
  flex: none;
  background: #f0f0f0;
}

.scrollbar button {
  width: 17px;
  height: 17px;
}

.track {
  flex: 1;
}

.thumb {
  width: 15px;
  height: 41%;
  margin-left: 1px;
  background: #cdcdcd;
}

/* Status bar */
.statusbar {
  display: flex;
  justify-content: space-between;
  align-items: center;
  height: 23px;
  flex: none;
  padding: 0 4px 0 14px;
  color: #1e395b;
}

.count {
  padding-right: 10px;
  border-right: 1px solid #f0f0f0;
}

.views {
  display: flex;
}

.views button {
  width: 22px;
  height: 23px;
}

.views .on {
  background: #cbe8f6;
  border: 1px solid #26a0da;
}

/* Taskbar */
.taskbar {
  position: relative;
  display: flex;
  height: 40px;
  flex: none;
  color: #fff;
}

.wallpaper {
  position: absolute;
  width: 100%;
  height: 100%;
  z-index: -1;
}

.start {
  width: 51px;
  padding-right: 2px;
}

.task {
  width: 59px;
  margin-right: 3px;
  background: rgba(255, 255, 255, 0.18);
  border: 1px solid rgba(255, 240, 210, 0.45);
}

/* Several open windows of one program */
.task.stacked {
  width: 53px;
  margin-right: 8px;
  box-shadow: 3px 0 0 -1px rgba(255, 255, 255, 0.2), 6px 0 0 -1px rgba(255, 255, 255, 0.4);
}

.task.current {
  background: rgba(255, 255, 255, 0.4);
  border-color: #f5ead2;
}

.task.plain {
  width: 63px;
  margin-right: 0;
  background: none;
  border-color: transparent;
}

.tray {
  display: flex;
  align-items: center;
  margin-left: auto;
}

.tray button {
  width: 24px;
  height: 24px;
}

.clock {
  display: flex;
  flex-direction: column;
  justify-content: center;
  width: 75px;
  padding-right: 4px;
  line-height: 17px;
  text-align: center;
}
```

FILE: script.js
```js
// name, modified, type, size
const files = [
  ["samples", "28.12.2014 13:50", "folder", ""],
  ["Tess4J", "7.4.2015 20:54", "folder", ""],
  ["artoolkitplus.jar", "23.12.2014 20:55", "jar", "24 KB"],
  ["artoolkitplus-android-arm.jar", "23.12.2014 17:08", "jar", "285 KB"],
  ["artoolkitplus-android-x86.jar", "23.12.2014 17:55", "jar", "347 KB"],
  ["artoolkitplus-linux-x86.jar", "23.12.2014 18:46", "jar", "149 KB"],
  ["artoolkitplus-linux-x86_64.jar", "23.12.2014 20:55", "jar", "168 KB"],
  ["artoolkitplus-macosx-x86_64.jar", "23.12.2014 18:04", "jar", "152 KB"],
  ["artoolkitplus-windows-x86.jar", "23.12.2014 18:40", "jar", "120 KB"],
  ["artoolkitplus-windows-x86_64.jar", "23.12.2014 20:00", "jar", "149 KB"],
  ["CHANGELOG.md", "23.12.2014 13:05", "file", "40 KB"],
  ["ffmpeg.jar", "23.12.2014 20:54", "jar", "219 KB"],
  ["ffmpeg-android-arm.jar", "23.12.2014 17:07", "jar", "8.091 KB"],
  ["ffmpeg-android-x86.jar", "23.12.2014 17:54", "jar", "7.962 KB"],
  ["ffmpeg-linux-x86.jar", "23.12.2014 18:45", "jar", "7.581 KB"],
  ["ffmpeg-linux-x86_64.jar", "23.12.2014 20:54", "jar", "7.849 KB"],
  ["ffmpeg-macosx-x86_64.jar", "23.12.2014 18:04", "jar", "7.131 KB"],
  ["ffmpeg-windows-x86.jar", "23.12.2014 18:38", "jar", "12.921 KB"],
  ["ffmpeg-windows-x86_64.jar", "23.12.2014 19:57", "jar", "13.958 KB"],
  ["flandmark.jar", "23.12.2014 20:56", "jar", "12 KB"],
  ["flandmark-android-arm.jar", "23.12.2014 17:08", "jar", "178 KB"],
  ["flandmark-android-x86.jar", "23.12.2014 17:55", "jar", "226 KB"],
  ["flandmark-linux-x86.jar", "23.12.2014 18:46", "jar", "36 KB"],
  ["flandmark-linux-x86_64.jar", "23.12.2014 20:56", "jar", "38 KB"],
];

const typeNames = {
  folder: "Dosya klasörü",
  jar: "Executable Jar File",
  file: "MD Dosyası",
};

document.getElementById("fileRows").innerHTML = files
  .map(function ([name, date, type, size]) {
    return `<tr>
      <td class="name"><span><svg class="ic"><use href="#${type}" /></svg>${name}</span></td>
      <td>${date}</td>
      <td>${typeNames[type]}</td>
      <td class="size">${size}</td>
    </tr>`;
  })
  .join("");
```
